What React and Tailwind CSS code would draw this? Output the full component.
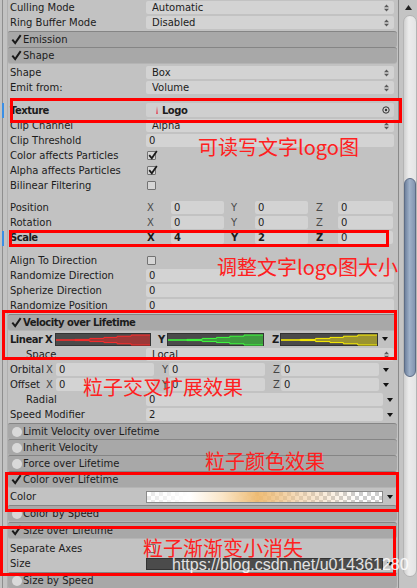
import React from "react";

const ui = "font-['DejaVu_Sans',sans-serif]";
const cjk = "font-['Noto_Sans_CJK_SC','Noto_Sans_CJK_JP',sans-serif]";

function UpDown() {
  return (
    <svg width="5" height="8" viewBox="0 0 5 8" className="shrink-0">
      <path d="M0 3.3 L2.5 0.5 L5 3.3Z M0 4.7 L2.5 7.5 L5 4.7Z" fill="#5a5a5a" />
    </svg>
  );
}

function Down() {
  return (
    <div className="w-[14px] shrink-0 flex justify-center">
      <svg width="6" height="4" viewBox="0 0 6 4">
        <path d="M0 0 L6 0 L3 4Z" fill="#111" />
      </svg>
    </div>
  );
}

function Check({ size = 10 }) {
  return (
    <svg width={size} height={size} viewBox="0 0 10 10" className="shrink-0">
      <path d="M1.2 5.2 L3.8 8.3 L8.8 1" fill="none" stroke="#1a1a1a" strokeWidth="1.8" />
    </svg>
  );
}

function Row({ label, bold, indent, h = "h-[15px]", className = "", children }) {
  return (
    <div className={`flex items-center ${h} ${className}`}>
      <div
        className={`w-[138px] shrink-0 truncate ${indent ? "pl-[18px]" : "pl-[2px]"} ${
          bold ? "font-bold tracking-[-0.5px]" : ""
        }`}
      >
        {label}
      </div>
      {children}
    </div>
  );
}

function Popup({ value }) {
  return (
    <div className="flex-1 mr-[3px] h-[13px] bg-[#d3d3d3] rounded-[2px] flex items-center pl-[6px] pr-[5px]">
      <span className="flex-1 truncate">{value}</span>
      <UpDown />
    </div>
  );
}

function Num({ value, className = "flex-1 mr-[3px]" }) {
  return (
    <div className={`${className} h-[13px] bg-[#d3d3d3] rounded-[2px] flex items-center pl-[3px]`}>
      {value}
    </div>
  );
}

function Box({ checked }) {
  return (
    <div className="ml-[1px] w-[9px] h-[9px] border border-[#727272] bg-[#d6d6d6] rounded-[1px] relative">
      {checked && (
        <div className="absolute left-[0px] -top-[2px]">
          <Check size={10} />
        </div>
      )}
    </div>
  );
}

function Vec({ label, bold, v }) {
  const f = bold ? "font-bold" : "text-[#4a4a4a]";
  return (
    <Row label={label} bold={bold}>
      <div className={`w-[25px] pl-[1px] ${f}`}>X</div>
      <Num value={<span className={bold ? "font-bold" : ""}>{v[0]}</span>} className="w-[53px]" />
      <div className={`w-[25px] ml-[6px] pl-[1px] ${f}`}>Y</div>
      <Num value={<span className={bold ? "font-bold" : ""}>{v[1]}</span>} className="w-[53px]" />
      <div className={`w-[23px] ml-[7px] pl-[1px] ${f}`}>Z</div>
      <Num value={v[2]} className="w-[55px]" />
    </Row>
  );
}

function Header({ title, on, bold, className = "" }) {
  return (
    <div
      className={`h-[16px] bg-[#a8a8a8] border-t border-[#858585] rounded-l-[2px] rounded-r-[3px] flex items-center shadow-[0_1px_0_#b4b4b4] ${className}`}
    >
      <div className="w-[15px] pl-[2px] flex justify-center shrink-0">
        {on ? (
          <Check size={11} />
        ) : (
          <div className="w-[10px] h-[10px] rounded-full bg-[#d9d9d9]" />
        )}
      </div>
      <span className={bold ? "font-bold tracking-[-0.5px]" : ""}>{title}</span>
    </div>
  );
}

function Curve({ w, fill, line }) {
  const H = 12;
  const m = 6;
  const steps = [0.2, 0.36, 0.51, 0.65, 0.8];
  const hs = [0.6, 1.6, 2.6, 3.8, 5];
  let top = [`0,${m}`];
  let bot = [`0,${m}`];
  let prev = 0;
  steps.forEach((s, i) => {
    const x = (s * w).toFixed(1);
    top.push(`${x},${m - prev}`, `${x},${m - hs[i]}`);
    bot.push(`${x},${m + prev}`, `${x},${m + hs[i]}`);
    prev = hs[i];
  });
  top.push(`${w},${m - prev}`);
  bot.push(`${w},${m + prev}`);
  const poly = [...top, ...bot.reverse()].join(" ");
  return (
    <div className="h-[13px] bg-[#4a4a4a] border border-[#333] shrink-0" style={{ width: w + 2 }}>
      <svg width={w} height={H} viewBox={`0 0 ${w} ${H}`}>
        <polygon points={poly} fill={fill} />
        <polyline points={top.join(" ")} fill="none" stroke={line} strokeWidth="1" />
        <polyline points={bot.join(" ")} fill="none" stroke={line} strokeWidth="1" />
      </svg>
    </div>
  );
}

function Note({ text, className }) {
  return (
    <div className={`absolute ${cjk} text-[20px] leading-none text-[#ff2020] whitespace-nowrap ${className}`}>
      {text}
    </div>
  );
}

function RedBox({ className }) {
  return <div className={`absolute border-[3px] border-[#ff0000] ${className}`} />;
}

export default function App() {
  return (
    <div className={`relative w-[417px] h-[588px] overflow-hidden bg-[#c2c2c2] flex text-[10px] text-[#1c1c1c] ${ui}`}>
      {/* left gutter */}
      <div className="w-[8px] shrink-0 relative">
        <div className="absolute left-[2px] top-0 bottom-0 w-px bg-[#8e8e8e]" />
        <div className="absolute left-[7px] top-0 bottom-0 w-px bg-[#b0b0b0]" />
        <div className="absolute left-[2px] top-[103px] h-[15px] w-[2px] bg-[#3b8fe5]" />
        <div className="absolute left-[2px] top-[231px] h-[15px] w-[2px] bg-[#3b8fe5]" />
      </div>

      {/* inspector column */}
      <div className="w-[389px] shrink-0 flex flex-col">
        <Row label="Culling Mode">
          <Popup value="Automatic" />
        </Row>
        <Row label="Ring Buffer Mode">
          <Popup value="Disabled" />
        </Row>
        <Header title="Emission" on className="mt-px" />
        <Header title="Shape" on />
        <Row label="Shape" className="mt-[2px]">
          <Popup value="Box" />
        </Row>
        <Row label="Emit from:">
          <Popup value="Volume" />
        </Row>
        <Row label="Texture" bold h="h-[17px]" className="mt-[7px]">
          <div className="flex-1 mr-[3px] h-[14px] bg-[#cfcfcf] rounded-[2px] flex items-center pl-[9px] pr-[4px]">
            <svg width="4" height="8" viewBox="0 0 4 8" className="mr-[3px]">
              <path d="M2 0 L3 8 L1 8Z" fill="#e05a6a" />
            </svg>
            <span className="flex-1 font-bold tracking-[-0.5px]">Logo</span>
            <svg width="8" height="8" viewBox="0 0 8 8">
              <circle cx="4" cy="4" r="3.2" fill="none" stroke="#333" strokeWidth="1" />
              <circle cx="4" cy="4" r="1.2" fill="#333" />
            </svg>
          </div>
        </Row>
        <Row label="Clip Channel">
          <Popup value="Alpha" />
        </Row>
        <Row label="Clip Threshold">
          <Num value="0" />
        </Row>
        <Row label="Color affects Particles">
          <Box checked />
        </Row>
        <Row label="Alpha affects Particles">
          <Box checked />
        </Row>
        <Row label="Bilinear Filtering">
          <Box />
        </Row>
        <div className="mt-[7px]" />
        <Vec label="Position" v={["0", "0", "0"]} />
        <Vec label="Rotation" v={["0", "0", "0"]} />
        <Vec label="Scale" bold v={["4", "2", "0"]} />
        <Row label="Align To Direction" className="mt-[8px]">
          <Box />
        </Row>
        <Row label="Randomize Direction">
          <Num value="0" />
        </Row>
        <Row label="Spherize Direction">
          <Num value="0" />
        </Row>
        <Row label="Randomize Position">
          <Num value="0" />
        </Row>

        <Header title="Velocity over Lifetime" on bold className="mt-[1px]" />
        <div className="flex items-center h-[17px] mt-px">
          <div className="w-[37px] pl-[2px] font-bold tracking-[-0.5px]">Linear</div>
          <div className="w-[10px] font-bold">X</div>
          <Curve w={94} fill="#9c3838" line="#ff2a2a" />
          <div className="w-[9px] ml-[7px] font-bold">Y</div>
          <Curve w={95} fill="#3f9a3f" line="#3dff3d" />
          <div className="w-[8px] ml-[8px] font-bold">Z</div>
          <Curve w={96} fill="#9a9330" line="#fff200" />
          <Down />
        </div>
        <Row label="Space" indent>
          <Popup value="Local" />
        </Row>
        {["Orbital", "Offset"].map((l) => (
          <div key={l} className="flex items-center h-[15px]">
            <div className="w-[38px] pl-[2px]">{l}</div>
            <div className="w-[10px] text-[#444]">X</div>
            <Num value="0" className="w-[98px]" />
            <div className="w-[7px] ml-[8px] text-[#444]">Y</div>
            <Num value="0" className="w-[96px]" />
            <div className="w-[8px] ml-[8px] text-[#444]">Z</div>
            <Num value="0" className="w-[98px]" />
            <Down />
          </div>
        ))}
        <Row label="Radial" indent>
          <Num value="0" className="flex-1" />
          <Down />
        </Row>
        <Row label="Speed Modifier">
          <Num value="2" className="flex-1" />
          <Down />
        </Row>

        <Header title="Limit Velocity over Lifetime" className="mt-px" />
        <Header title="Inherit Velocity" />
        <Header title="Force over Lifetime" />
        <Header title="Color over Lifetime" on />
        <Row label="Color" h="h-[18px]" className="mt-px">
          <div className="flex-1 h-[12px] relative border border-[#8a8a8a] bg-[repeating-conic-gradient(#cdcdcd_0%_25%,#ffffff_0%_50%)] bg-[length:8px_8px]">
            <div className="absolute inset-0 bg-[linear-gradient(to_right,rgba(255,255,255,0.55)_0%,rgba(255,255,255,1)_18%,rgba(250,230,200,1)_32%,rgba(238,185,110,0.95)_47%,rgba(240,200,150,0.6)_65%,rgba(255,255,255,0)_90%)]" />
          </div>
          <Down />
        </Row>
        <Header title="Color by Speed" />
        <Header title="Size over Lifetime" on className="mt-px" />
        <Row label="Separate Axes" className="mt-[3px]">
          <Box />
        </Row>
        <Row label="Size">
          <div className="flex-1 h-[12px] bg-[#4b4b4b] border border-[#333]" />
          <Down />
        </Row>
        <Header title="Size by Speed" className="mt-px" />
      </div>

      {/* right border + scrollbar */}
      <div className="w-[3px] shrink-0 flex justify-center">
        <div className="w-px h-full bg-[#8a8a8a]" />
      </div>
      <div className="w-[17px] shrink-0 flex flex-col items-center bg-[#c4c4c4]">
        <div className="h-[15px] flex items-center justify-center">
          <svg width="7" height="5" viewBox="0 0 7 5">
            <path d="M0 5 L3.5 0 L7 5Z" fill="#222" />
          </svg>
        </div>
        <div className="w-[14px] h-[562px] ml-[3px] rounded-full bg-[linear-gradient(to_right,#d0d0d0,#ececec_40%,#e4e4e4)] border border-[#b4b4b4] flex flex-col">
          <div className="mt-[162px] h-[199px] rounded-full bg-[linear-gradient(to_right,#6f829e,#9eb0c8_45%,#8395b0)] border border-[#5d6d86]" />
        </div>
      </div>

      {/* annotations */}
      <RedBox className="left-[10px] top-[98px] w-[392px] h-[25px]" />
      <RedBox className="left-[9px] top-[230px] w-[380px] h-[17px]" />
      <RedBox className="left-[2px] top-[310px] w-[395px] h-[50px]" />
      <RedBox className="left-[5px] top-[472px] w-[394px] h-[40px]" />
      <RedBox className="left-0 top-[526px] w-[396px] h-[50px]" />

      <Note text="可读写文字logo图" className="left-[198px] top-[137px]" />
      <Note text="调整文字logo图大小" className="left-[217px] top-[257px]" />
      <Note text="粒子交叉扩展效果" className="left-[83px] top-[377px]" />
      <Note text="粒子颜色效果" className="left-[205px] top-[451px]" />
      <Note text="粒子渐渐变小消失" className="left-[143px] top-[538px]" />

      <div className="absolute left-[172px] top-[557px] font-['Liberation_Sans',Arial,sans-serif] text-[16px] leading-none text-white/85 whitespace-nowrap">
        https://blog.csdn.net/u014361280
      </div>
    </div>
  );
}
